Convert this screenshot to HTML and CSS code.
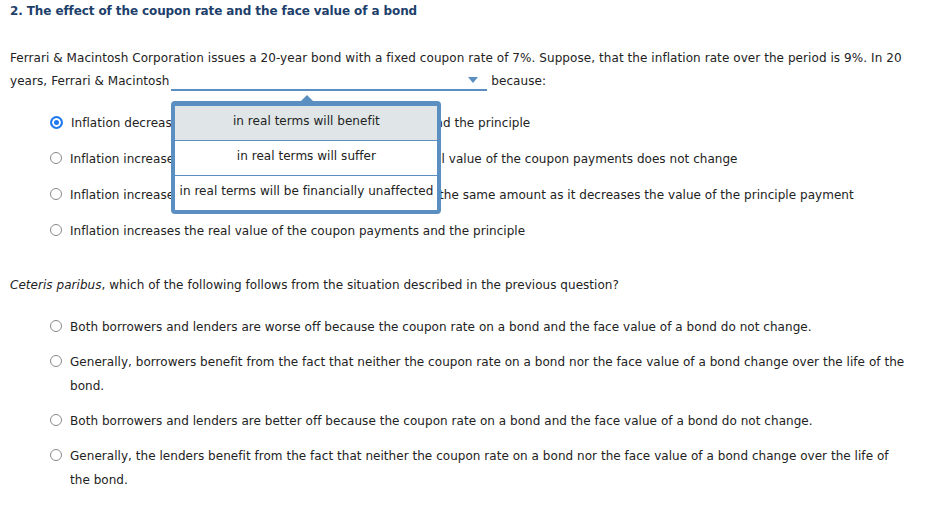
FILE: index.html
```html
<!DOCTYPE html>
<html>
<head>
<meta charset="utf-8">
<link rel="stylesheet" href="styles.css">
</head>
<body>
<div class="page">
  <h2 class="title">2. The effect of the coupon rate and the face value of a bond</h2>
  <p class="intro">Ferrari &amp; Macintosh Corporation issues a 20-year bond with a fixed coupon rate of 7%. Suppose, that the inflation rate over the period is 9%. In 20 years, Ferrari &amp; Macintosh <span class="dropwrap"><span class="drop"><span class="arrow"></span></span><span class="menu"><span class="caret"></span><span class="item active">in real terms will benefit</span><span class="item">in real terms will suffer</span><span class="item">in real terms will be financially unaffected</span></span></span> because:</p>
  <ul class="opts first">
    <li><span class="radio checked"></span><span class="lbl">Inflation decreases the real value of the coupon payments and the principle</span></li>
    <li><span class="radio"></span><span class="lbl">Inflation increases the value of the principle, whereas the real value of the coupon payments does not change</span></li>
    <li><span class="radio"></span><span class="lbl">Inflation increases the values of all the coupon payments by the same amount as it decreases the value of the principle payment</span></li>
    <li><span class="radio"></span><span class="lbl">Inflation increases the real value of the coupon payments and the principle</span></li>
  </ul>
  <p class="q"><em>Ceteris paribus</em>, which of the following follows from the situation described in the previous question?</p>
  <ul class="opts second">
    <li><span class="radio"></span><span class="lbl">Both borrowers and lenders are worse off because the coupon rate on a bond and the face value of a bond do not change.</span></li>
    <li><span class="radio"></span><span class="lbl">Generally, borrowers benefit from the fact that neither the coupon rate on a bond nor the face value of a bond change over the life of the bond.</span></li>
    <li><span class="radio"></span><span class="lbl">Both borrowers and lenders are better off because the coupon rate on a bond and the face value of a bond do not change.</span></li>
    <li><span class="radio"></span><span class="lbl">Generally, the lenders benefit from the fact that neither the coupon rate on a bond nor the face value of a bond change over the life of the bond.</span></li>
  </ul>
</div>
</body>
</html>
```
FILE: styles.css
```css
html, body {
  margin: 0;
  padding: 0;
  background: #fff;
}
body {
  font-family: "DejaVu Sans", Verdana, sans-serif;
  font-size: 12px;
  letter-spacing: 0.04px;
  color: #222;
}
.page {
  width: 903px;
  padding: 0 0 0 10px;
}
.title {
  margin: 0;
  padding-top: 3px;
  font-size: 12px;
  font-weight: bold;
  letter-spacing: -0.1px;
  color: #1d3f6b;
  line-height: 16px;
}
.intro {
  margin: 28px 0 0 0;
  line-height: 23px;
  letter-spacing: 0.07px;
}
.dropwrap {
  position: relative;
  display: inline-block;
  vertical-align: baseline;
  letter-spacing: 0.04px;
  margin-left: -2px;
}
.drop {
  display: inline-block;
  width: 316px;
  height: 18px;
  border-bottom: 2px solid #5b8fc1;
  vertical-align: -6px;
  position: relative;
}
.arrow {
  position: absolute;
  right: 9px;
  top: 6px;
  width: 0;
  height: 0;
  border-left: 5px solid transparent;
  border-right: 5px solid transparent;
  border-top: 6px solid #5b8fc1;
}
.menu {
  position: absolute;
  left: 0;
  top: 31px;
  width: 262px;
  border: 4px solid #5b8fc1;
  border-radius: 4px;
  background: #fff;
  z-index: 5;
  display: flex;
  flex-direction: column;
}
.caret {
  position: absolute;
  left: 126px;
  top: -10px;
  width: 0;
  height: 0;
  border-left: 6px solid transparent;
  border-right: 6px solid transparent;
  border-bottom: 6px solid #5b8fc1;
}
.item {
  display: block;
  height: 34px;
  line-height: 30px;
  text-align: center;
  white-space: nowrap;
  color: #222;
  border-top: 1px solid #5b8fc1;
}
.item:first-of-type {
  border-top: none;
}
.item.active {
  background: #e0e6e8;
}
.opts {
  list-style: none;
  margin: 0;
  padding: 0 6px 0 40px;
}
.opts li {
  display: flex;
  align-items: flex-start;
  line-height: 24px;
}
.opts.first {
  margin-top: 18px;
}
.opts.first li {
  margin-bottom: 12px;
}
.opts.second {
  margin-top: 18px;
}
.opts.second li {
  margin-bottom: 11px;
}
.radio {
  flex: none;
  width: 12px;
  height: 12px;
  border: 1px solid #8a8a8a;
  border-radius: 50%;
  margin: 5px 8px 0 0;
  box-sizing: border-box;
  background: #fff;
}
.radio.checked {
  border: 2px solid #1f7aef;
  background: #1f7aef;
  box-shadow: inset 0 0 0 2px #fff;
  width: 13px;
  height: 13px;
}
.q {
  margin: 30px 0 0 0;
  line-height: 24px;
}
```
